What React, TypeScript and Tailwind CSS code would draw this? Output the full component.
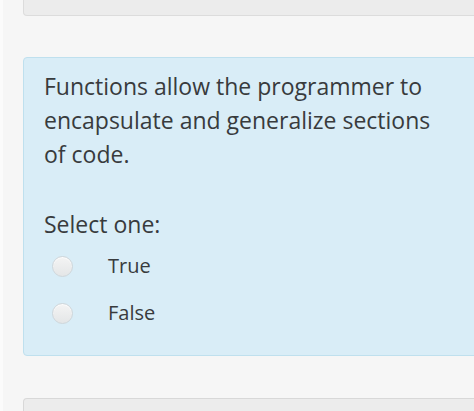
const options = ['True', 'False'];

function Radio() {
  return (
    <span className="block h-[21px] w-[21px] shrink-0 rounded-full border border-[#cfd6da] bg-gradient-to-b from-[#f4f4f4] to-[#e4e6e7] shadow-[inset_0_1px_1px_rgba(255,255,255,0.8)]" />
  );
}

export default function App() {
  return (
    <div
      className="flex h-[411px] w-[474px] overflow-hidden bg-[#f6f6f6] text-[#383b3d]"
      style={{ fontFamily: '"Open Sans", "Noto Sans", sans-serif' }}
    >
      <div className="w-[3px] shrink-0 bg-[#fbfbfb]" />
      <div className="flex min-w-0 flex-1 flex-col pl-[20px]">
        <div className="h-[16px] w-[480px] shrink-0 rounded-b border border-t-0 border-[#dcdcdc] bg-[#ececec]" />

        <div className="mt-[41px] h-[299px] w-[480px] shrink-0 rounded border border-[#bfe0ee] bg-[#d9edf7] pl-[20px] pt-[11px]">
          <p className="w-[400px] text-[23px] leading-[34px]">
            Functions allow the programmer to encapsulate and generalize sections of code.
          </p>
          <p className="mt-[36px] text-[23px] leading-[34px]">Select one:</p>
          <div className="mt-[11px] flex flex-col gap-[19px]">
            {options.map((o) => (
              <label key={o} className="flex h-[28px] items-center pl-[8px]">
                <Radio />
                <span className="ml-[35px] text-[20px] leading-[28px]">{o}</span>
              </label>
            ))}
          </div>
        </div>

        <div className="mt-[42px] h-[20px] w-[480px] shrink-0 rounded-t border border-b-0 border-[#d8d8d8] bg-[#ececec]" />
      </div>
    </div>
  );
}
